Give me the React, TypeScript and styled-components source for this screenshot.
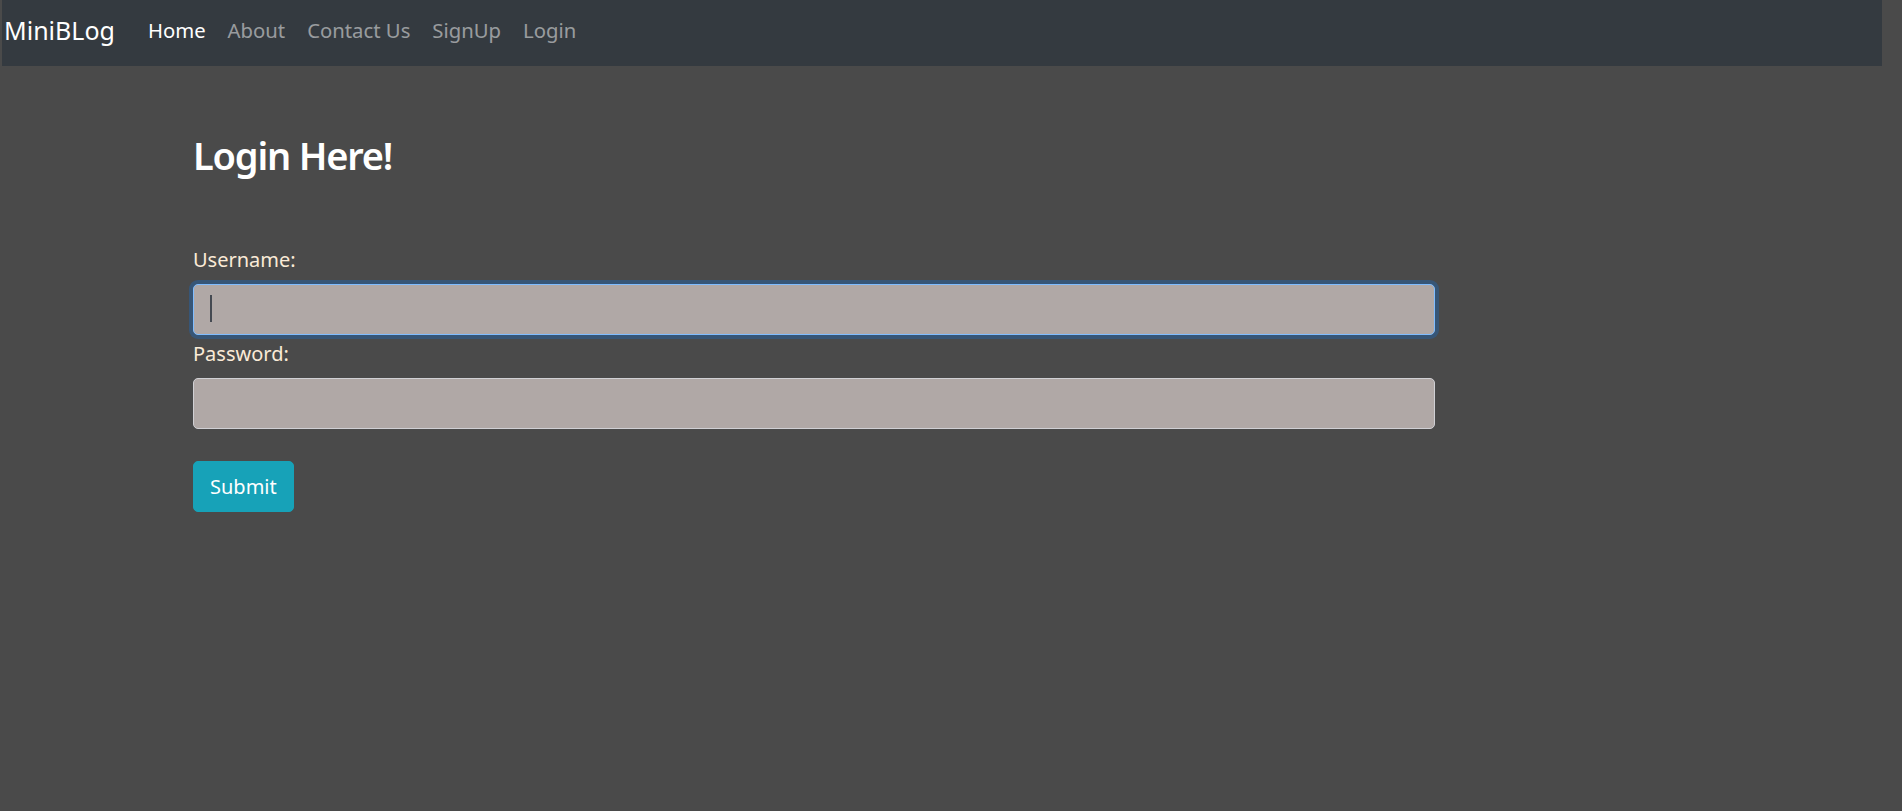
import React from 'react';
import styled, { createGlobalStyle } from 'styled-components';

const GlobalStyle = createGlobalStyle`
  html, body {
    margin: 0;
    padding: 0;
    background: #4a4a4a;
    font-family: "Noto Sans", "Open Sans", sans-serif;
  }
  * {
    box-sizing: border-box;
  }
`;

const links = ['Home', 'About', 'Contact Us', 'SignUp', 'Login'];

const App: React.FC = () => {
  return (
    <>
      <GlobalStyle />
      <Navbar>
        <Brand href="#">MiniBLog</Brand>
        <NavList>
          {links.map((l, i) => (
            <NavLink key={l} href="#" $active={i === 0}>
              {l}
            </NavLink>
          ))}
        </NavList>
      </Navbar>
      <Main>
        <Heading>Login Here!</Heading>
        <Form onSubmit={(e) => e.preventDefault()}>
          <Label htmlFor="username">Username:</Label>
          <InputWrap>
            <Input id="username" type="text" autoFocus $focused />
            <Caret />
          </InputWrap>
          <Label htmlFor="password">Password:</Label>
          <InputWrap>
            <Input id="password" type="password" />
          </InputWrap>
          <SubmitButton type="submit">Submit</SubmitButton>
        </Form>
      </Main>
    </>
  );
};

const Navbar = styled.nav`
  display: flex;
  align-items: center;
  height: 66px;
  margin: 0 20px 0 2px;
  padding: 0 2px 7px;
  background: #343a40;
`;
const Brand = styled.a`
  font-size: 25px;
  color: #fff;
  text-decoration: none;
  margin-right: 22px;
`;
const NavList = styled.div`
  display: flex;
  align-items: center;
`;
const NavLink = styled.a<{ $active?: boolean }>`
  padding: 0 11px;
  font-size: 20.3px;
  color: ${({ $active }) => ($active ? '#fff' : 'rgba(255, 255, 255, 0.5)')};
  text-decoration: none;
`;
const Main = styled.main`
  padding: 65px 0 0 193px;
`;
const Heading = styled.h2`
  margin: 0;
  font-size: 38px;
  line-height: 48px;
  font-weight: 600;
  letter-spacing: -1.2px;
  color: #fff;
`;
const Form = styled.form`
  display: flex;
  flex-direction: column;
  align-items: flex-start;
  width: 1242px;
  margin-top: 62px;
`;
const Label = styled.label`
  padding-top: 3px;
  font-size: 20px;
  line-height: 32px;
  color: antiquewhite;
  margin-bottom: 8px;
`;
const InputWrap = styled.div`
  position: relative;
  width: 100%;
`;
const Input = styled.input<{ $focused?: boolean }>`
  display: block;
  width: 100%;
  height: 51px;
  padding: 0 16px;
  font-size: 21px;
  font-family: inherit;
  color: #495057;
  caret-color: transparent;
  background: #b0a8a6;
  border: 1px solid ${({ $focused }) => ($focused ? '#80bdff' : '#d0d0d4')};
  border-radius: 5px;
  outline: none;
  box-shadow: ${({ $focused }) => ($focused ? '0 0 0 4px rgba(0, 123, 255, 0.25)' : 'none')};
`;
const Caret = styled.span`
  position: absolute;
  left: 17px;
  top: 11px;
  width: 2px;
  height: 27px;
  background: #454a52;
  pointer-events: none;
`;
const SubmitButton = styled.button`
  margin-top: 32px;
  height: 51px;
  padding: 0 16px;
  font-size: 20px;
  font-family: inherit;
  color: #fff;
  background: #17a2b8;
  border: 1px solid #17a2b8;
  border-radius: 5px;
  cursor: pointer;
`;

export default App;
